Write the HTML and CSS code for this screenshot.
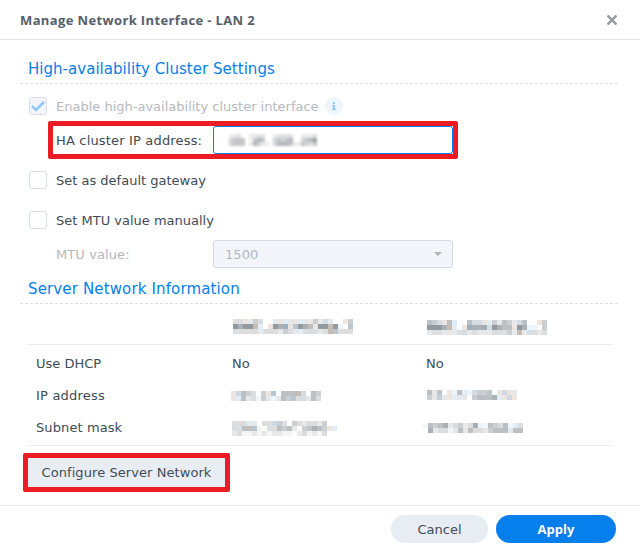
FILE: index.html
```html
<!DOCTYPE html>
<html lang="en">
<head>
<meta charset="utf-8">
<title>Manage Network Interface - LAN 2</title>
<link rel="stylesheet" href="styles.css">
</head>
<body>
<main class="dialog">
  <header class="titlebar">
    <h1>Manage Network Interface - LAN 2</h1>
    <svg class="close" width="10" height="10" viewBox="0 0 10 10"><path d="M.5 .5L9.5 9.5M9.5 .5L.5 9.5"/></svg>
  </header>
  <div class="content">
    <h2 class="h-cluster">High-availability Cluster Settings</h2>
    <div class="row disabled">
      <span class="check checked"><svg width="16" height="16" viewBox="0 0 16 16"><path d="M2 8L6 12L14 4"/></svg></span>
      <span class="t-enable">Enable high-availability cluster interface</span>
      <svg class="info" width="18" height="18" viewBox="0 0 18 18"><circle cx="9" cy="9" r="9"/><path d="M8 5h2v2H8zM7 8h3v4h1v1H7v-1h1V9H7z"/></svg>
    </div>
    <div class="highlight ip-frame">
      <label class="t-ha">HA cluster IP address:</label>
      <div class="input"><svg class="mosaic address" data-mosaic="address"></svg></div>
    </div>
    <div class="row gateway"><span class="check"></span><span class="t-gateway">Set as default gateway</span></div>
    <div class="row mtu-check"><span class="check"></span><span class="t-mtu">Set MTU value manually</span></div>
    <div class="mtu"><label class="t-mtuval">MTU value:</label><div class="select"><span class="t-value">1500</span><i class="arrow"></i></div></div>
    <h2 class="h-server">Server Network Information</h2>
    <div class="table">
      <div class="tr head"><span></span><svg class="mosaic m-host1" data-mosaic="host1"></svg><svg class="mosaic m-host2" data-mosaic="host2"></svg></div>
      <div class="tr"><span class="t-dhcp">Use DHCP</span><span>No</span><span>No</span></div>
      <div class="tr"><span class="t-ip">IP address</span><svg class="mosaic m-ip1" data-mosaic="ip1"></svg><svg class="mosaic m-ip2" data-mosaic="ip2"></svg></div>
      <div class="tr"><span class="t-mask">Subnet mask</span><svg class="mosaic m-mask1" data-mosaic="mask1"></svg><svg class="mosaic m-mask2" data-mosaic="mask2"></svg></div>
    </div>
    <div class="highlight button-frame"><button class="configure"><span class="t-config">Configure Server Network</span></button></div>
  </div>
  <footer><button class="cancel"><span class="t-cancel">Cancel</span></button><button class="apply"><span class="t-apply">Apply</span></button></footer>
</main>
<script src="mosaic.js"></script>
</body>
</html>
```
FILE: styles.css
```css
* { box-sizing: border-box; }
body { margin: 0; background: #fff; color: #414b55; font: 13px/18px "DejaVu Sans", sans-serif; }
.dialog { width: 640px; height: 553px; display: flex; flex-direction: column; border-radius: 3px; overflow: hidden; }
.titlebar { height: 40px; flex: none; border-bottom: 1px solid #e3e6e8; display: flex; align-items: center; justify-content: space-between; padding: 0 23px 0 20px; }
h1 { margin: 0; font: bold 13px/18px "Open Sans", sans-serif; letter-spacing: .37px; color: #56606b; }
.close { stroke: #939ba3; stroke-width: 2.4; fill: none; margin-top: 1px; }
.content { height: 465px; flex: none; padding: 20px 20px 0; }
h2 { margin: 0; height: 24px; padding-left: 8px; font-size: 15px; line-height: 18px; font-weight: normal; color: #057feb; white-space: nowrap; background: repeating-linear-gradient(90deg, #dddfe1 0 3px, transparent 3px 5px) bottom left / 100% 1px no-repeat; }
.h-cluster { letter-spacing: .03px; }
label, span { white-space: nowrap; }
.row { display: flex; align-items: center; height: 18px; padding-left: 9px; }
.disabled { margin-top: 13px; color: #b5bac0; }
.check { width: 18px; height: 18px; border: 1px solid #d6e0e9; border-radius: 3px; margin-right: 9px; flex: none; display: block; }
.checked { background: #f3f5fa; }
.checked svg { display: block; stroke: #90c6f8; stroke-width: 2.5; fill: none; }
.info { margin-left: 6px; flex: none; }
.info circle { fill: #edf6ff; }
.info path { fill: #90c6f5; }
.t-enable, .t-gateway, .t-mtu, .t-mtuval, .t-value { padding-top: 2px; }
.t-cancel { display: block; padding-top: 2px; }
.t-ha { letter-spacing: .17px; padding-top: 1px; }
.highlight { border: 5px solid #ed1c24; border-radius: 2px; }
.ip-frame { margin: 6px 0 0 28px; width: 410px; height: 38px; display: flex; align-items: center; padding-left: 3px; }
.ip-frame label { width: 157px; flex: none; }
.input { width: 240px; flex: none; height: 28px; border: 1px solid #057feb; border-radius: 3px; padding: 7px 11px; }
.gateway { margin-top: 12px; }
.mtu-check { margin-top: 22px; }
.mtu { display: flex; align-items: center; height: 28px; margin-top: 11px; padding-left: 36px; color: #b2b8bf; letter-spacing: .1px; }
.mtu label { width: 157px; }
.select { width: 240px; height: 28px; border: 1px solid #d0dce8; border-radius: 3px; background: #f4f5fa; display: flex; align-items: center; justify-content: space-between; padding: 0 10px 0 11px; }
.arrow { border: 4px solid transparent; border-top: 4px solid #afb5bc; border-bottom: 0; }
.h-server { margin-top: 12px; letter-spacing: .14px; }
.table { margin-left: 8px; width: 584px; border-bottom: 1px solid #e6edf4; height: 142px; }
.tr { display: grid; grid-template-columns: 196px 194px 1fr; height: 32px; align-items: center; padding-left: 8px; }
.t-ip { letter-spacing: .2px; }
.t-mask { letter-spacing: .1px; }
.tr.head { height: 41px; border-bottom: 1px solid #e6edf4; margin-bottom: 3px; align-items: start; }
.mosaic { display: block; shape-rendering: crispEdges; }
.address { filter: blur(.8px); opacity: .9; }
.m-host1 { margin: 15px 0 0 1px; }
.m-host2 { margin: 16px 0 0 1px; }
.m-ip1 { margin-left: -1px; }
.m-ip2 { margin: 0 0 2px 1px; }
.m-mask1 { margin-left: 0; }
.m-mask2 { margin: 0 0 0 -3px; }
.button-frame { width: 207px; height: 39px; margin: 7px 0 0 3px; }
button { border: 0; color: #414b55; font: 13px/18px "DejaVu Sans", sans-serif; padding: 0; }
.configure { width: 197px; height: 29px; background: #e8edf4; letter-spacing: .07px; display: block; }
footer { border-top: 1px solid #e3e8ef; flex: 1; display: flex; justify-content: flex-end; padding: 9px 24px 0; gap: 8px; }
footer button { height: 28px; border-radius: 14px; background: #e8edf4; }
.cancel { width: 97px; }
footer .apply { width: 120px; background: #057feb; color: #fff; font: bold 13px/18px "Open Sans", sans-serif; }
```
FILE: mosaic.js
```js
// Each row lists its cells; letters index the palette and dots are blank.
const palette = {
  a: '#f4f5f5', b: '#e7e8e9', c: '#dcddde', d: '#cccfd2', e: '#bdc0c3',
  f: '#a9b0b6', g: '#929a9f', h: '#d4dde3', i: '#e0edf7', j: '#eee5df',
  k: '#c6bcb6', l: '#cfd8e6', m: '#edf6fd', n: '#9daebd', o: '#b9c6d0'
};
const mosaics = {
  host1: { cell: 5, rows: ['ccjbdh..bjibjibbdbhb..jd', 'gfggki.jgfnjogfkbggkgm.o', 'cccccicccbdcbichcbckoccc'] },
  host2: { cell: 5, rows: ['edhjei..ehhjidbedbhe..jd', 'gggfki.jnffnhgfeejgfmm.d', 'bccbbbchbcbbbcccdbkbhcbc'] },
  ip1: { cell: 5, rows: ['jledc.djo.eeekh.ed', 'jiebcadbmbedoccbec'] },
  ip2: { cell: 5, rows: ['ebo.jmeimhddo.jljb', 'dbdbjibb.deeefijlj'] },
  mask1: { cell: 5, rows: ['cccib.ccldc.dcbccbd', 'ccekoa.ccedeb.dofedji', 'bcaabababbaa.bcabac'] },
  mask2: { cell: 5, rows: ['aedefbhdbcfmaedhemic', '.fbccabebeccbdeeebee'] },
  address: { cell: 4, rows: ['.bbc..bbcc..bcccc..bbbc', '.deek.aefe..dedef..defg', '.deee.bfdbb.dfffebbedce'] }
};
for (const svg of document.querySelectorAll('[data-mosaic]')) {
  const { cell, rows } = mosaics[svg.dataset.mosaic];
  svg.setAttribute('width', Math.max(...rows.map(r => r.length)) * cell);
  svg.setAttribute('height', rows.length * cell);
  rows.forEach((row, y) => [...row].forEach((key, x) => {
    if (!palette[key]) return;
    const rect = document.createElementNS('http://www.w3.org/2000/svg', 'rect');
    rect.setAttribute('x', x * cell);
    rect.setAttribute('y', y * cell);
    rect.setAttribute('width', cell);
    rect.setAttribute('height', cell);
    rect.setAttribute('fill', palette[key]);
    svg.append(rect);
  }));
}
```
